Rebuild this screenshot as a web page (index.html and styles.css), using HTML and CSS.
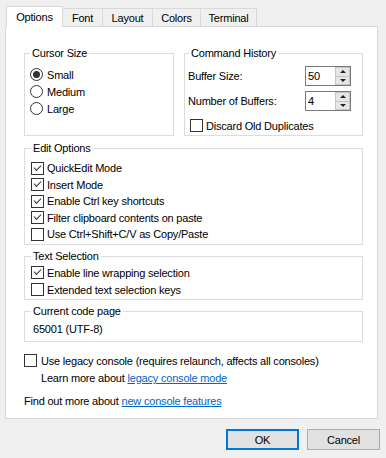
FILE: index.html
```html
<!DOCTYPE html>
<html lang="en">
<head>
    <meta charset="UTF-8">
    <title>Console Properties</title>
    <link rel="stylesheet" href="styles.css">
</head>
<body>
    <div class="dialog">
        <div class="tabs">
            <div class="tab active">Options</div>
            <div class="tab w-font">Font</div>
            <div class="tab w-layout">Layout</div>
            <div class="tab w-colors">Colors</div>
            <div class="tab w-terminal">Terminal</div>
        </div>

        <div class="panel">
            <div class="top-row">
                <fieldset class="group cursor-size">
                    <legend>Cursor Size</legend>
                    <label class="option"><span class="radio checked"></span>Small</label>
                    <label class="option"><span class="radio"></span>Medium</label>
                    <label class="option"><span class="radio"></span>Large</label>
                </fieldset>

                <fieldset class="group history">
                    <legend>Command History</legend>
                    <div class="spin-row">
                        <span>Buffer Size:</span>
                        <div class="spin"><span class="spin-value">50</span><span class="spin-btns"><span class="up"></span><span class="down"></span></span></div>
                    </div>
                    <div class="spin-row second">
                        <span>Number of Buffers:</span>
                        <div class="spin"><span class="spin-value">4</span><span class="spin-btns"><span class="up"></span><span class="down"></span></span></div>
                    </div>
                    <label class="option discard"><span class="box"></span>Discard Old Duplicates</label>
                </fieldset>
            </div>

            <fieldset class="group edit-options">
                <legend>Edit Options</legend>
                <label class="option row"><span class="box checked"></span>QuickEdit Mode</label>
                <label class="option row"><span class="box checked"></span>Insert Mode</label>
                <label class="option row"><span class="box checked"></span>Enable Ctrl key shortcuts</label>
                <label class="option row"><span class="box checked"></span>Filter clipboard contents on paste</label>
                <label class="option row"><span class="box"></span>Use Ctrl+Shift+C/V as Copy/Paste</label>
            </fieldset>

            <fieldset class="group text-selection">
                <legend>Text Selection</legend>
                <label class="option"><span class="box checked"></span>Enable line wrapping selection</label>
                <label class="option"><span class="box"></span>Extended text selection keys</label>
            </fieldset>

            <fieldset class="group code-page">
                <legend>Current code page</legend>
                <div class="code-value">65001 (UTF-8)</div>
            </fieldset>

            <label class="option legacy"><span class="box"></span>Use legacy console (requires relaunch, affects all consoles)</label>
            <p class="learn">Learn more about <a href="#">legacy console mode</a></p>
            <p class="find">Find out more about <a href="#">new console features</a></p>
        </div>

        <div class="buttons">
            <button class="btn default">OK</button>
            <button class="btn">Cancel</button>
        </div>
    </div>
</body>
</html>
```

FILE: styles.css
```css
/* dialog shell */
body {
    margin: 0;
    background: #f0f0f0;
    font-family: "Liberation Sans", Arial, sans-serif;
    font-size: 11px;
    letter-spacing: -0.2px;
    color: #000;
}

.dialog {
    width: 386px;
    height: 458px;
    box-sizing: border-box;
    padding: 6px 6px 0 5px;
}

/* tabs */
.tabs {
    display: flex;
    align-items: flex-end;
    height: 20px;
    padding-left: 1px;
    position: relative;
    z-index: 1;
}
.tab {
    height: 18px;
    box-sizing: border-box;
    border: 1px solid #d9d9d9;
    border-bottom: none;
    margin-left: -1px;
    display: flex;
    align-items: center;
    justify-content: center;
    background: #f0f0f0;
}
.tab.active {
    width: 57px;
    height: 21px;
    margin-left: 0;
    margin-bottom: -1px;
    background: #fff;
    padding-bottom: 1px;
}
.w-font { width: 41px; }
.w-layout { width: 51px; }
.w-colors { width: 49px; }
.w-terminal { width: 57px; }

/* main panel */
.panel {
    width: 373px;
    height: 393px;
    box-sizing: border-box;
    border: 1px solid #d9d9d9;
    background: #fff;
    padding: 19px 14px 0 18px;
}

.group {
    margin: 0;
    border: 1px solid #dcdcdc;
    padding: 0 6px;
    min-width: 0;
}
.group legend {
    padding: 0 2px;
    line-height: 14px;
}

.top-row {
    display: flex;
    gap: 10px;
}
.cursor-size {
    width: 150px;
    box-sizing: border-box;
    padding: 6px 5px 18px;
}
.history {
    flex: 1;
    padding: 6px 11px 1px 3px;
}
.history legend { margin-left: 1px; }

/* options */
.option {
    display: flex;
    align-items: center;
    height: 17px;
    white-space: nowrap;
}
.option.row { height: 16.5px; }

.box, .radio {
    width: 13px;
    height: 13px;
    box-sizing: border-box;
    border: 1px solid #333;
    background: #fff;
    position: relative;
    flex-shrink: 0;
    margin-right: 3px;
}
.radio {
    border-radius: 50%;
    margin-right: 4px;
}
.radio.checked::after {
    content: "";
    position: absolute;
    left: 2px;
    top: 2px;
    width: 7px;
    height: 7px;
    border-radius: 50%;
    background: #333;
}
.box.checked::after {
    content: "";
    position: absolute;
    left: 2px;
    top: 2px;
    width: 6px;
    height: 3px;
    border-left: 1px solid #333;
    border-bottom: 1px solid #333;
    transform: rotate(-45deg);
}

/* spin boxes */
.spin-row {
    display: flex;
    justify-content: space-between;
    align-items: center;
    height: 20px;
}
.spin-row.second { margin-top: 5px; }
.spin {
    width: 46px;
    height: 20px;
    box-sizing: border-box;
    border: 1px solid #7a7a7a;
    display: flex;
    justify-content: space-between;
}
.spin-value {
    padding-left: 2px;
    line-height: 18px;
}
.spin-btns {
    width: 15px;
    display: flex;
    flex-direction: column;
    border-left: 1px solid #fff;
}
.spin-btns span {
    flex: 1;
    background: #e6e6e6;
    border: 1px solid #c5c5c5;
    border-top-width: 0;
    position: relative;
}
.spin-btns .up { border-top-width: 1px; }
.spin-btns span::after {
    content: "";
    position: absolute;
    left: 4px;
    top: 2px;
    border-left: 3px solid transparent;
    border-right: 3px solid transparent;
}
.spin-btns .up::after { border-bottom: 3px solid #222; }
.spin-btns .down::after { border-top: 3px solid #222; top: 2px; }

.discard {
    margin-top: 6px;
    margin-left: 2px;
}

.edit-options {
    margin-top: 5px;
    padding-top: 5px;
    padding-bottom: 1.5px;
}
.text-selection {
    margin-top: 4px;
    padding-top: 1px;
    padding-bottom: 1px;
}
.code-page {
    margin-top: 4px;
    padding-top: 4px;
    padding-bottom: 5px;
}
.code-value {
    line-height: 14px;
    padding-left: 2px;
}

.legacy {
    margin-top: 10px;
}
.legacy .box { margin-right: 4px; }

.learn, .find {
    margin: 2px 0 0;
    line-height: 14px;
}
.learn { padding-left: 17px; }
.find { margin-top: 9px; }

a {
    color: #0066cc;
}

/* bottom buttons */
.buttons {
    display: flex;
    justify-content: flex-end;
    gap: 8px;
    margin-top: 10px;
}
.btn {
    width: 73px;
    height: 21px;
    box-sizing: border-box;
    border: 1px solid #adadad;
    background: #e1e1e1;
    font: inherit;
    letter-spacing: inherit;
    color: #000;
    padding: 0;
}
.btn.default {
    border: 2px solid #0078d7;
}
```
